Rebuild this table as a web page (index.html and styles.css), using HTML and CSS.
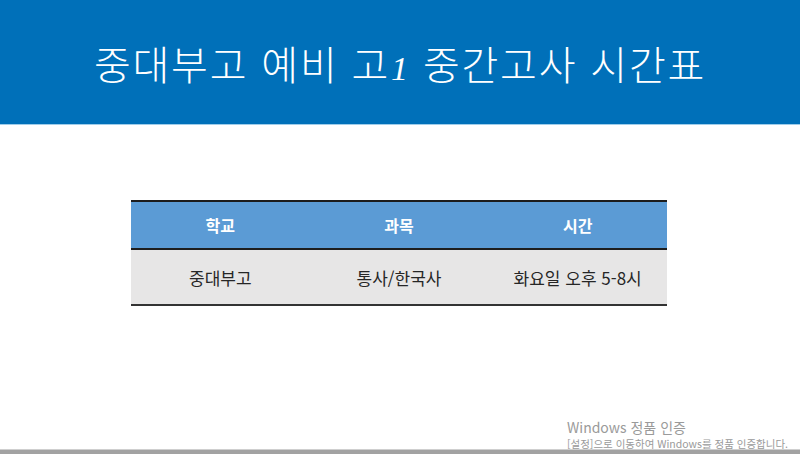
FILE: index.html
```html
<!DOCTYPE html>
<html lang="ko">
<head>
<meta charset="utf-8">
<link rel="stylesheet" href="styles.css">
</head>
<body>
<div class="slide">
  <header class="banner">
    <h1 class="title">중대부고 예비 고<span class="num">1</span> 중간고사 시간표</h1>
  </header>
  <main class="content">
    <table class="schedule">
      <thead>
        <tr><th>학교</th><th>과목</th><th>시간</th></tr>
      </thead>
      <tbody>
        <tr><td>중대부고</td><td>통사/한국사</td><td>화요일 오후 5-8시</td></tr>
      </tbody>
    </table>
  </main>
  <div class="watermark">
    <div class="wm-title">Windows 정품 인증</div>
    <div class="wm-sub">[설정]으로 이동하여 Windows를 정품 인증합니다.</div>
  </div>
  <div class="taskbar"></div>
</div>
</body>
</html>
```
FILE: styles.css
```css
* { box-sizing: border-box; }
html, body { margin: 0; padding: 0; }
body {
  width: 800px;
  height: 454px;
  overflow: hidden;
  background: #ffffff;
  font-family: "Noto Sans CJK KR", "Noto Sans", sans-serif;
}
.slide {
  position: relative;
  width: 800px;
  height: 454px;
  display: flex;
  flex-direction: column;
}
.banner {
  height: 125px;
  background: #0070b9;
  border-bottom: 1px solid #9fcdea;
  display: flex;
  align-items: center;
  justify-content: center;
  padding-top: 4px;
}
.title {
  margin: 0;
  color: #ffffff;
  font-weight: 300;
  font-size: 40px;
  letter-spacing: 1.8px;
  line-height: 1;
}
.num {
  font-family: "Liberation Serif", serif;
  font-style: italic;
  font-size: 34px;
  margin-left: 1px;
}
.content {
  display: flex;
  justify-content: center;
  padding-top: 75px;
  padding-right: 2px;
}
.schedule {
  width: 536px;
  border-collapse: collapse;
  table-layout: fixed;
  border-top: 2px solid #1c1c1c;
  border-bottom: 2px solid #333333;
}
.schedule th {
  background: #5b9bd5;
  color: #ffffff;
  font-weight: 700;
  font-size: 16px;
  height: 48px;
  border-bottom: 2px solid #1e1e1e;
  padding: 0;
}
.schedule td {
  background: #e7e6e6;
  color: #262626;
  font-size: 17px;
  font-weight: 400;
  text-align: center;
  height: 56px;
  padding: 0;
}
.watermark {
  position: absolute;
  left: 567px;
  top: 419px;
  color: #9a9a9a;
  white-space: nowrap;
}
.wm-title {
  font-size: 14px;
  line-height: 17px;
}
.wm-sub {
  margin-top: 1px;
  font-size: 10.5px;
  line-height: 13px;
}
.taskbar {
  position: absolute;
  left: 0;
  bottom: 0;
  width: 800px;
  height: 5px;
  background: #a2a2a2;
  border-top: 1px solid #cfcfcf;
}
```
